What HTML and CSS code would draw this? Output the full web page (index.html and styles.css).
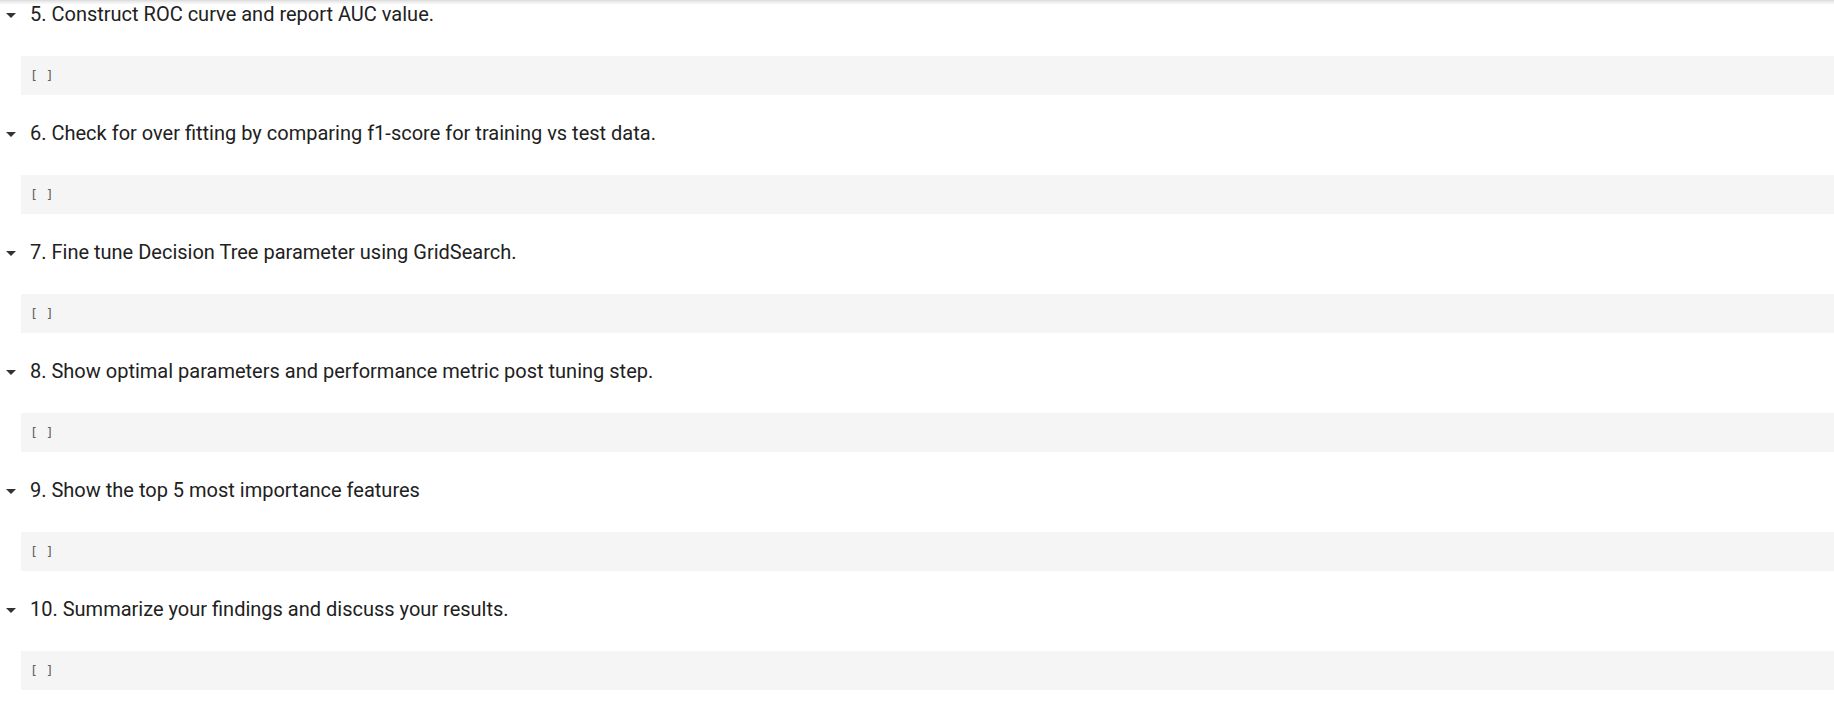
FILE: index.html
```html
<!DOCTYPE html>
<html>
<head>
<meta charset="utf-8">
<link rel="stylesheet" href="styles.css">
</head>
<body>
<main class="notebook">
  <section class="section">
    <div class="heading"><span class="caret"></span><span class="title">5. Construct ROC curve and report AUC value.</span></div>
    <div class="cell"><span class="prompt">[ ]</span></div>
  </section>
  <section class="section">
    <div class="heading"><span class="caret"></span><span class="title">6. Check for over fitting by comparing f1-score for training vs test data.</span></div>
    <div class="cell"><span class="prompt">[ ]</span></div>
  </section>
  <section class="section">
    <div class="heading"><span class="caret"></span><span class="title">7. Fine tune Decision Tree parameter using GridSearch.</span></div>
    <div class="cell"><span class="prompt">[ ]</span></div>
  </section>
  <section class="section">
    <div class="heading"><span class="caret"></span><span class="title">8. Show optimal parameters and performance metric post tuning step.</span></div>
    <div class="cell"><span class="prompt">[ ]</span></div>
  </section>
  <section class="section">
    <div class="heading"><span class="caret"></span><span class="title">9. Show the top 5 most importance features</span></div>
    <div class="cell"><span class="prompt">[ ]</span></div>
  </section>
  <section class="section">
    <div class="heading"><span class="caret"></span><span class="title">10. Summarize your findings and discuss your results.</span></div>
    <div class="cell"><span class="prompt">[ ]</span></div>
  </section>
</main>
</body>
</html>
```
FILE: styles.css
```css
html, body {
  margin: 0;
  padding: 0;
}
body {
  background: #ffffff linear-gradient(to bottom, #d9d9d9 0, #eeeeee 2px, #ffffff 5px) no-repeat;
  background-size: 100% 6px;
  font-family: Roboto, "Noto Sans", "Liberation Sans", sans-serif;
  color: #212121;
  overflow: hidden;
}
.notebook {
  display: flex;
  flex-direction: column;
}
.section {
  display: flex;
  flex-direction: column;
  height: 119px;
}
.heading {
  display: flex;
  align-items: center;
  height: 29px;
  padding-left: 6px;
}
.caret {
  width: 0;
  height: 0;
  border-left: 5px solid transparent;
  border-right: 5px solid transparent;
  border-top: 5px solid #333333;
  margin-right: 14px;
  margin-top: 1px;
}
.title {
  font-size: 20px;
  line-height: 29px;
  white-space: nowrap;
}
.cell {
  margin-top: 27px;
  margin-left: 21px;
  height: 39px;
  background: #f5f5f5;
  display: flex;
  align-items: center;
  padding-left: 9px;
}
.prompt {
  font-family: "DejaVu Sans Mono", "Liberation Mono", monospace;
  font-size: 13px;
  color: #616161;
  white-space: pre;
}
```
